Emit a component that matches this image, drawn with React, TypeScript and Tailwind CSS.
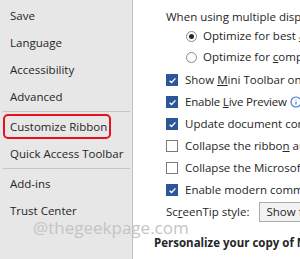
import { Info } from "lucide-react";

const font = { fontFamily: '"Open Sans", "Noto Sans", sans-serif' };

function NavItem({ label, boxed }: { label: string; boxed?: boolean }) {
  if (boxed) {
    return (
      <div className="h-[27px] flex items-center pl-[3px]">
        <div className="h-[25px] w-[108px] flex items-center pl-[5px] border-2 border-[#e8101a] rounded-[5px]">
          {label}
        </div>
      </div>
    );
  }
  return <div className="h-[27px] flex items-center pl-[10px]">{label}</div>;
}

function Divider() {
  return <div className="h-px bg-[#c6c6c6] ml-[3px] mr-[2px] my-[1px]" />;
}

function Radio({ checked }: { checked?: boolean }) {
  return (
    <span className="w-[11px] h-[11px] rounded-full border border-[#8a8a8a] bg-white flex items-center justify-center shrink-0">
      {checked && <span className="w-[5px] h-[5px] rounded-full bg-[#262626]" />}
    </span>
  );
}

function Check({ checked }: { checked?: boolean }) {
  if (!checked) {
    return <span className="w-[12px] h-[12px] border border-[#7a7a7a] bg-white shrink-0" />;
  }
  return (
    <span className="w-[12px] h-[12px] bg-[#2b579a] flex items-center justify-center shrink-0">
      <svg width="9" height="9" viewBox="0 0 10 10" fill="none">
        <path d="M1.8 5.2 L4 7.3 L8.3 2.6" stroke="white" strokeWidth="1.5" />
      </svg>
    </span>
  );
}

function CheckRow({ checked, children }: { checked?: boolean; children: React.ReactNode }) {
  return (
    <div className="h-[22px] flex items-center gap-[7px] whitespace-nowrap">
      <Check checked={checked} />
      <span>{children}</span>
    </div>
  );
}

export default function App() {
  return (
    <div
      className="relative w-[300px] h-[259px] overflow-hidden flex bg-white text-[11.5px] leading-[16px] text-[#262626]"
      style={font}
    >
      {/* left nav */}
      <div className="w-[133px] shrink-0 bg-[#e7e7e7] border-r border-[#c3c3c3] pt-[2px] whitespace-nowrap">
        <NavItem label="Save" />
        <NavItem label="Language" />
        <NavItem label="Accessibility" />
        <NavItem label="Advanced" />
        <Divider />
        <NavItem label="Customize Ribbon" boxed />
        <NavItem label="Quick Access Toolbar" />
        <Divider />
        <NavItem label="Add-ins" />
        <NavItem label="Trust Center" />
      </div>

      {/* right options */}
      <div className="flex-1 min-w-0 pl-[33px] pt-[7px] whitespace-nowrap">
        <div className="h-[20px] flex items-center">When using multiple displays:</div>
        <div className="h-[18px] flex items-center gap-[6px] pl-[20px]">
          <Radio checked />
          <span>
            Optimize for best <span className="underline">a</span>ppearance
          </span>
        </div>
        <div className="h-[24px] flex items-center gap-[6px] pl-[20px]">
          <Radio />
          <span>
            Optimize for <span className="underline">c</span>ompatibility
          </span>
        </div>
        <CheckRow checked>
          Show <span className="underline">M</span>ini Toolbar on selection
        </CheckRow>
        <div className="h-[22px] flex items-center gap-[7px]">
          <Check checked />
          <span className="tracking-[-0.2px]">
            Enable <span className="underline">L</span>ive Preview
          </span>
          <Info size={12} strokeWidth={2.2} className="-ml-[4px] text-[#2f6fd0] shrink-0" />
        </div>
        <CheckRow checked>Update document content while dragging</CheckRow>
        <CheckRow>
          Collapse the ribbo<span className="underline">n</span> automatically
        </CheckRow>
        <CheckRow>Collapse the Microsoft Search box by default</CheckRow>
        <CheckRow checked>Enable modern comments</CheckRow>
        <div className="h-[22px] flex items-center">
          <span>
            Sc<span className="underline">r</span>eenTip style:
          </span>
          <div className="ml-[10px] h-[20px] border border-[#acacac] bg-[#f3f3f3] flex items-center pl-[6px] pr-[20px]">
            Show feature descriptions in ScreenTips
          </div>
        </div>
        <div className="mt-[12px] -ml-[12px] font-bold">Personalize your copy of Microsoft Office</div>
      </div>

      {/* watermark */}
      <div className="absolute left-[33px] top-[217px] text-[17px] leading-[22px] text-[#c4c4c4] pointer-events-none">
        @thegeekpage.com
      </div>
    </div>
  );
}
